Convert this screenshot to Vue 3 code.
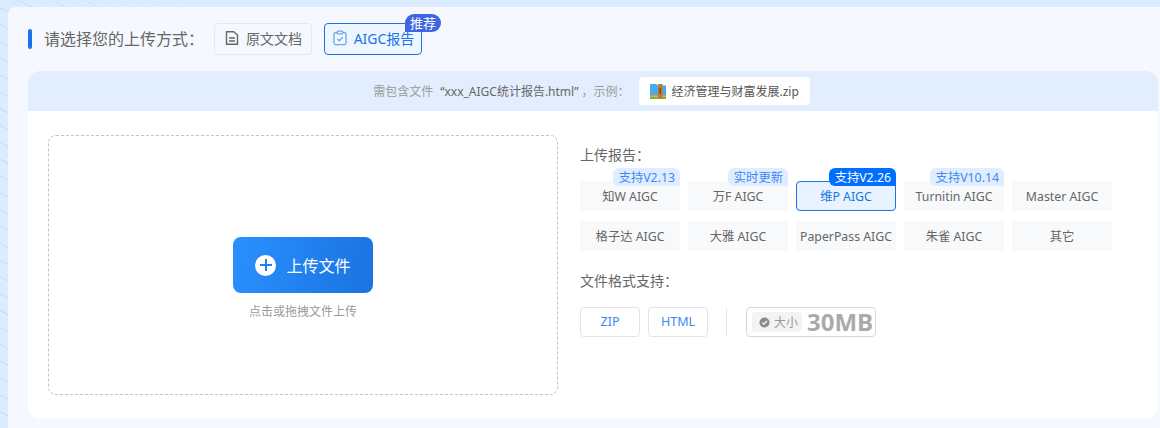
<template>
  <div class="page">
    <div class="panel">
      <div class="head">
        <i class="bar"></i>
        <span class="head-title">请选择您的上传方式：</span>
        <div class="mode">
          <svg class="mode-icon" viewBox="0 0 16 16" fill="none" stroke="currentColor" stroke-width="1.4">
            <path d="M2.5 1.7h7.2L13.5 5v9.3h-11z" stroke-linejoin="round" />
            <path d="M5 8h6M5 11h6" />
          </svg>
          原文文档
        </div>
        <div class="mode active">
          <svg class="mode-icon" viewBox="0 0 16 16" fill="none" stroke="currentColor" stroke-width="1.3">
            <rect x="2" y="2.6" width="12" height="12" rx="1.6" />
            <rect x="5.2" y="1.2" width="5.6" height="2.6" rx="0.8" fill="#eef6ff" />
            <path d="M5.2 8.8l2.1 2 3.5-3.6" />
          </svg>
          AIGC报告
          <span class="mode-tag">推荐</span>
        </div>
      </div>

      <div class="card">
        <div class="notice">
          <span class="gray">需包含文件</span>
          <span class="dark">“xxx_AIGC统计报告.html”</span>
          <span class="gray comma">，示例：</span>
          <div class="sample">
            <svg class="zip" viewBox="0 0 16 16">
              <path d="M0 2a1 1 0 0 1 1-1h5.5l1 1.5H16V12H0z" fill="#45aaf2" />
              <rect y="12" width="16" height="1.5" fill="#ef9a1f" />
              <rect y="13.5" width="16" height="2.5" fill="#7ab833" />
              <rect x="8" y="1" width="4.5" height="15" fill="#c9772a" />
              <rect x="9.5" y="5" width="1.5" height="6" fill="#7d4a18" />
            </svg>
            经济管理与财富发展.zip
          </div>
        </div>

        <div class="body">
          <div class="drop">
            <div class="upload-btn">
              <span class="plus"></span>
              上传文件
            </div>
            <p class="drop-tip">点击或拖拽文件上传</p>
          </div>

          <div class="side">
            <div class="side-title">上传报告：</div>
            <div class="grid">
              <div v-for="item in reports" :key="item.name" class="cell" :class="{ selected: item.selected }">
                {{ item.name }}
                <span v-if="item.tag" class="cell-tag">{{ item.tag }}</span>
              </div>
            </div>
            <div class="side-title formats-title">文件格式支持：</div>
            <div class="formats">
              <div class="fmt">ZIP</div>
              <div class="fmt">HTML</div>
              <i class="divider"></i>
              <div class="size">
                <span class="size-chip">
                  <svg class="check" viewBox="0 0 12 12">
                    <circle cx="6" cy="6" r="5.5" fill="#8a8a8a" />
                    <path d="M3.4 6.1l1.9 1.8 3.3-3.5" fill="none" stroke="#fff" stroke-width="1.3" />
                  </svg>
                  大小
                </span>
                <b class="size-num">30MB</b>
              </div>
            </div>
          </div>
        </div>
      </div>
    </div>
  </div>
</template>

<script setup>
const reports = [
  { name: '知W AIGC', tag: '支持V2.13' },
  { name: '万F AIGC', tag: '实时更新' },
  { name: '维P AIGC', tag: '支持V2.26', selected: true },
  { name: 'Turnitin AIGC', tag: '支持V10.14' },
  { name: 'Master AIGC' },
  { name: '格子达 AIGC' },
  { name: '大雅 AIGC' },
  { name: 'PaperPass AIGC' },
  { name: '朱雀 AIGC' },
  { name: '其它' }
]
</script>

<style>
html,
body {
  margin: 0;
  background: #dcecff;
}
</style>

<style scoped>
* {
  box-sizing: border-box;
}

.page {
  width: 1160px;
  height: 428px;
  padding: 7px 0 0 8px;
  overflow: hidden;
  font-family: "Noto Sans", "Noto Sans CJK SC", sans-serif;
  background:
    linear-gradient(90deg, rgba(220, 236, 255, 0) 0, #dcecff 200px),
    repeating-linear-gradient(27deg, #dcecff 0 14px, #cddded 14px 15px);
}

.panel {
  height: 421px;
  padding: 16px 2px 9px 20px;
  background: rgba(249, 252, 255, 0.85);
  border-radius: 8px 0 0 0;
}

.head {
  display: flex;
  align-items: center;
  height: 32px;
}

.bar {
  width: 4px;
  height: 20px;
  margin-right: 12px;
  background: #1a73e8;
  border-radius: 2px;
}

.head-title {
  width: 170px;
  padding-bottom: 2px;
  font-size: 16px;
  color: #666;
}

.mode {
  position: relative;
  display: flex;
  align-items: center;
  justify-content: center;
  gap: 6px;
  width: 98px;
  height: 32px;
  margin-right: 12px;
  padding-bottom: 2px;
  font-size: 14px;
  color: #666;
  border: 1px solid #e4e9f0;
  border-radius: 4px;
}

.mode.active {
  color: #1a73e8;
  background: #eef6ff;
  border-color: #1a73e8;
}

.mode-icon {
  width: 16px;
  height: 16px;
}

.mode.active .mode-icon {
  color: #6fa5ea;
}

.mode-tag {
  position: absolute;
  top: -10px;
  right: -20px;
  width: 36px;
  height: 18px;
  font-size: 13px;
  line-height: 18px;
  text-align: center;
  color: #fff;
  background: #3f66e0;
  border-radius: 9px 9px 9px 0;
}

.card {
  height: 348px;
  margin-top: 16px;
  overflow: hidden;
  background: #fff;
  border-radius: 12px;
}

.notice {
  display: flex;
  align-items: center;
  justify-content: center;
  height: 40px;
  padding-right: 3px;
  font-size: 12px;
  background: #e2eefd;
}

.gray {
  color: #999;
}

.dark {
  margin-left: 7px;
  color: #666;
}

.comma {
  margin-left: 3px;
}

.sample {
  display: flex;
  align-items: center;
  gap: 6px;
  height: 28px;
  margin-left: 9px;
  padding: 0 11px;
  color: #555;
  background: #fff;
  border-radius: 4px;
}

.zip {
  width: 16px;
  height: 16px;
}

.body {
  display: flex;
  padding: 24px 20px;
}

.drop {
  display: flex;
  flex-direction: column;
  align-items: center;
  width: 510px;
  height: 260px;
  padding-top: 101px;
  border: 1px dashed #c4c4c4;
  border-radius: 8px;
}

.upload-btn {
  display: flex;
  align-items: center;
  justify-content: center;
  gap: 10px;
  width: 140px;
  height: 56px;
  font-size: 16px;
  color: #fff;
  background: linear-gradient(100deg, #2a90ff, #1a73e0);
  border-radius: 8px;
}

.plus {
  position: relative;
  width: 21px;
  height: 21px;
  background: #fff;
  border-radius: 50%;
}

.plus::before,
.plus::after {
  content: "";
  position: absolute;
  top: 9.5px;
  left: 4.5px;
  width: 12px;
  height: 2px;
  background: #1f80ee;
}

.plus::after {
  transform: rotate(90deg);
}

.drop-tip {
  margin: 9px 0 0;
  font-size: 12px;
  color: #999;
}

.side {
  width: 540px;
  margin-left: 22px;
  padding-top: 10px;
}

.side-title {
  height: 20px;
  font-size: 14px;
  line-height: 20px;
  color: #666;
}

.grid {
  display: grid;
  grid-template-columns: repeat(5, 100px);
  gap: 10px 8px;
  margin-top: 16px;
}

.cell {
  position: relative;
  height: 30px;
  font-size: 12.3px;
  line-height: 32px;
  text-align: center;
  color: #666;
  background: #f7f9fb;
  border-radius: 4px;
}

.cell.selected {
  line-height: 30px;
  color: #1a73e8;
  background: #e8f3ff;
  border: 1px solid #1a73e8;
}

.cell-tag {
  position: absolute;
  top: -13px;
  right: 0;
  height: 18px;
  padding: 0 5px 0 6px;
  font-size: 12.3px;
  line-height: 19px;
  color: #3d86f5;
  background: #e0edff;
  border-radius: 6px 6px 0 6px;
}

.cell.selected .cell-tag {
  top: -14px;
  right: -1px;
  color: #fff;
  background: #006eff;
}

.formats-title {
  margin-top: 20px;
}

.formats {
  display: flex;
  align-items: center;
  margin-top: 16px;
}

.fmt {
  width: 60px;
  height: 30px;
  margin-right: 8px;
  font-size: 12.5px;
  line-height: 28px;
  text-align: center;
  color: #3d86f5;
  border: 1px solid #e2e4ea;
  border-radius: 4px;
}

.divider {
  width: 1px;
  height: 28px;
  margin: 0 19px 0 10px;
  background: #e2e4ea;
}

.size {
  display: flex;
  align-items: center;
  width: 130px;
  height: 30px;
  padding-left: 5px;
  border: 1px solid #d8d8d8;
  border-radius: 4px;
}

.size-chip {
  display: flex;
  align-items: center;
  gap: 4px;
  width: 50px;
  height: 20px;
  padding-left: 7px;
  font-size: 12px;
  color: #999;
  background: #f3f3f3;
  border-radius: 4px;
}

.check {
  width: 11px;
  height: 11px;
}

.size-num {
  margin-left: 5px;
  font-family: "Open Sans", sans-serif;
  font-size: 24px;
  line-height: 28px;
  color: #aaa;
}
</style>
